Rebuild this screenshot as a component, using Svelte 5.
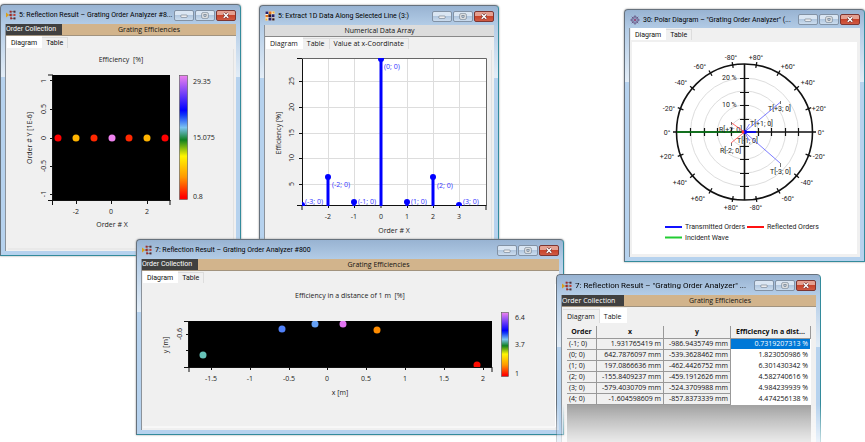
<script>
  const polar = { x: 744.5, y: 132, r: 68 };
  const angles = [20, 40, 60, 80, 100, 120, 140, 160, 200, 220, 240, 260, 280, 300, 320, 340];
  const ticks = angles.map((a) => {
    const c = Math.cos((a * Math.PI) / 180);
    const s = Math.sin((a * Math.PI) / 180);
    return { x1: polar.x + 65 * c, y1: polar.y - 65 * s, x2: polar.x + 71 * c, y2: polar.y - 71 * s };
  });
  const degrees = [
    ['-80°', 731, 60], ['+80°', 756, 60], ['-60°', 700, 69], ['+60°', 788, 69],
    ['-40°', 681, 85], ['+40°', 808, 85], ['-20°', 669, 111], ['+20°', 819, 111],
    ['0°', 667, 135], ['0°', 821, 135], ['+20°', 667, 159], ['-20°', 819, 159],
    ['+40°', 680, 185], ['-40°', 807, 185], ['+60°', 698, 201], ['-60°', 788, 201],
    ['+80°', 731, 210], ['-80°', 756, 210]
  ];
  const efficiencyDots = [
    [58, '#ff0000'], [76, '#ffb400'], [94, '#ff2800'], [112, '#ee82ee'],
    [129, '#ff2800'], [147, '#ffb400'], [165, '#ff0000']
  ];
  const distanceDots = [
    [203, 355, '#66c2b8'], [282, 329, '#5080f8'], [315, 324, '#64a0f4'],
    [343, 324, '#e274f2'], [377, 330, '#ff8c00'], [477, 365, '#ff0c00']
  ];
  const orders = [
    { x: 302, top: 205, label: '(-3; 0)', lx: 305, ly: 204 },
    { x: 328, top: 177, label: '(-2; 0)', lx: 332, ly: 187 },
    { x: 354, top: 202, label: '(-1; 0)', lx: 358, ly: 204 },
    { x: 381, top: 59, label: '(0; 0)', lx: 384, ly: 69 },
    { x: 407, top: 202, label: '(1; 0)', lx: 411, ly: 204 },
    { x: 433, top: 177, label: '(2; 0)', lx: 437, ly: 188 },
    { x: 459, top: 205, label: '(3; 0)', lx: 463, ly: 204 }
  ];
  const rows = [
    ['(-1; 0)', '1.931765419 m', '-986.9435749 mm', '0.7319207313 %'],
    ['(0; 0)', '642.7876097 mm', '-539.3628462 mm', '1.823050986 %'],
    ['(1; 0)', '197.0866636 mm', '-462.4426752 mm', '6.301430342 %'],
    ['(2; 0)', '-155.8409237 mm', '-459.1912626 mm', '4.582740616 %'],
    ['(3; 0)', '-579.4030709 mm', '-524.3709988 mm', '4.984239939 %'],
    ['(4; 0)', '-1.604598609 m', '-857.8373339 mm', '4.474256138 %']
  ];
</script>

{#snippet treeIcon()}
  <svg class="icon" viewBox="0 0 10 10" aria-hidden="true">
    <path d="M0 2.5 3.2 5 0 7.5Z" fill="#d9a01c" />
    <path d="M3 5h3M5 1.5v7M5 1.5h3M5 8.5h3M6 5h3" stroke="#8a6460" stroke-width=".7" fill="none" />
    <g fill="#9e2a2a">
      <rect x="3.6" y=".7" width="1.9" height="1.9" /><rect x="3.6" y="4" width="2" height="2" /><rect x="4.2" y="7.4" width="1.9" height="1.9" />
      <rect x="7.5" y="3.9" width="2" height="2" fill="#c43c30" />
    </g>
    <g fill="#4a3038"><rect x="7.5" y=".7" width="2" height="2" /><rect x="7.5" y="7.4" width="2" height="2" /></g>
  </svg>
{/snippet}

{#snippet dataIcon()}
  <svg class="icon" viewBox="0 0 10 10" aria-hidden="true">
    <rect x=".5" y=".5" width="9" height="9" fill="#fff4dc" />
    <path d="M.5 .5h3v2.500h-3zM6.500 3.200h3v3h-3zM3.500 6.500h3v3h-3z" fill="#24206c" />
    <path d="M4 .5h2.500v2.500H4zM.5 4h2.500v2.200H.5z" fill="#e8731c" />
    <path d="M3.300 3.300h2.700v2.700H3.300zM7.200 7.200h2.300v2.300H7.200z" fill="#2c1420" />
    <path d="M7.500 .5h2v2h-2zM.5 7.500h2v2h-2z" fill="#f2b13c" />
  </svg>
{/snippet}

{#snippet polarIcon()}
  <svg class="icon" viewBox="0 0 10 10" aria-hidden="true" fill="none" stroke="#5c4678" stroke-width=".8">
    <circle cx="5" cy="5" r="3.300" /><path d="M5 0v10M0 5h10M1.700 1.700l6.600 6.600M8.300 1.700 1.700 8.300" stroke-width=".6" />
    <circle cx="5" cy="5" r="1" fill="#a8487c" stroke="none" />
  </svg>
{/snippet}

{#snippet titleBar(icon, title)}
  <header class="title">
    {@render icon()}
    <h2>{title}</h2>
    <div class="controls">
      <button type="button" aria-label="Minimize"><svg viewBox="0 0 18 10"><rect x="5.5" y="4.5" width="7" height="2.5" rx=".8" fill="#fff" stroke="#5f6b78" stroke-width=".7" /></svg></button>
      <button type="button" aria-label="Maximize"><svg viewBox="0 0 18 10"><rect x="5.5" y="2" width="7" height="6" rx=".8" fill="#fff" stroke="#5f6b78" stroke-width=".8" /><rect x="7.7" y="4" width="2.6" height="2" fill="#b8cbe0" stroke="#5f6b78" stroke-width=".7" /></svg></button>
      <button type="button" class="close" aria-label="Close"><svg viewBox="0 0 18 10"><path d="m6.500 2.500 5 5m0-5-5 5" stroke="#6b3030" stroke-width="2.800" /><path d="m6.500 2.500 5 5m0-5-5 5" stroke="#fff" stroke-width="1.700" /></svg></button>
    </div>
  </header>
{/snippet}

{#snippet gratingBar()}
  <div class="bar tan"><span class="collection">Order Collection</span><span class="caption">Grating Efficiencies</span></div>
{/snippet}

{#snippet tabs(names, active)}
  <div class="tabs" role="tablist">
    {#each names as name}
      <button type="button" role="tab" aria-selected={name === active} class:active={name === active}>{name}</button>
    {/each}
  </div>
{/snippet}

{#snippet colorScale(id)}
  <linearGradient {id} x1="0" y1="0" x2="0" y2="1">
    <stop offset="0" stop-color="#ee82ee" />
    <stop offset=".28" stop-color="#0000ff" />
    <stop offset=".32" stop-color="#1038f8" />
    <stop offset=".42" stop-color="#7cc4f0" />
    <stop offset=".52" stop-color="#108020" />
    <stop offset=".65" stop-color="#fff600" />
    <stop offset=".82" stop-color="#ff9800" />
    <stop offset=".98" stop-color="#ff0000" />
  </linearGradient>
{/snippet}

{#snippet turned(label, x, y)}
  <text transform="translate({x} {y}) rotate(-90)" text-anchor="middle">{label}</text>
{/snippet}

<main class="desktop">
  <section class="window reflection">
    {@render titleBar(treeIcon, '5: Reflection Result – Grating Order Analyzer #8...')}
    <div class="body">
      {@render gratingBar()}
      {@render tabs(['Diagram', 'Table'], 'Diagram')}
      <svg class="chart" viewBox="6 49 230 202" role="img" aria-label="Efficiency">
        <defs>{@render colorScale('scaleA')}</defs>
        <path d="M233.500 49v200H8" fill="none" stroke="#e2e2e2" />
        <text x="121" y="62" text-anchor="middle" xml:space="preserve">Efficiency  [%]</text>
        <rect class="plot" x="53" y="75" width="117" height="125" />
        <path class="axis" d="M52.500 75v125.500H170.500M48 75h5M48 200.500h5M52.500 200v5M170 200v5M50 80.500h3M50 109.500h3M50 138.500h3M50 166.500h3M50 194.500h3M76.500 200v4M111.500 200v4M147.500 200v4" />
        {@render turned('1', 46, 81)}
        {@render turned('0.5', 46, 109)}
        {@render turned('0', 46, 138)}
        {@render turned('-0.5', 46, 166)}
        {@render turned('-1', 46, 194)}
        {@render turned('Order # Y [1E-6]', 32, 138)}
        <g text-anchor="middle">
          <text x="76" y="214">-2</text><text x="111" y="214">0</text><text x="147" y="214">2</text>
          <text x="112" y="227">Order # X</text>
        </g>
        {#each efficiencyDots as [x, color]}<circle cx={x} cy="138" r="3.5" fill={color} />{/each}
        <rect x="179.5" y="75.5" width="8" height="124" fill="url(#scaleA)" stroke="#555" stroke-width=".6" />
        <text x="193" y="84">29.35</text><text x="193" y="140">15.075</text><text x="193" y="199">0.8</text>
      </svg>
    </div>
  </section>

  <section class="window extract">
    {@render titleBar(dataIcon, '5: Extract 1D Data Along Selected Line (3:)')}
    <div class="body">
      <div class="bar gray"><span class="caption">Numerical Data Array</span></div>
      {@render tabs(['Diagram', 'Table', 'Value at x-Coordinate'], 'Diagram')}
      <svg class="chart" viewBox="265 50 229 194" role="img" aria-label="Numerical Data Array">
        <path d="M491.500 50v194" fill="none" stroke="#e2e2e2" />
        <rect x="302" y="59" width="184" height="146" fill="#fff" />
        <path d="M328.500 59v146M354.500 59v146M407.500 59v146M433.500 59v146M459.500 59v146M302 81.500h184M302 107.500h184M302 133.500h184M302 158.500h184M302 184.500h184" stroke="#ddd" />
        <path d="M302 58.500H486.500V205" fill="none" stroke="#666" />
        <path class="axis" d="M302.500 59v146.500H486.500M297 58.500h5M297 205.500h5M302 205v5M486 205v5M299 81.500h3M299 107.500h3M299 133.500h3M299 158.500h3M299 184.500h3M328.500 205v3M354.500 205v3M381 205v3M407.500 205v3M433.500 205v3M459.500 205v3" />
        <clipPath id="plotB"><rect x="302" y="58" width="184" height="148" /></clipPath>
        <g clip-path="url(#plotB)" fill="#00f">
          {#each orders as o}
            <path d="M{o.x} {o.top}V206" stroke="#00f" stroke-width="3" /><circle cx={o.x} cy={o.top} r="3" />
          {/each}
        </g>
        <g class="order">{#each orders as o}<text x={o.lx} y={o.ly}>{o.label}</text>{/each}</g>
        {@render turned('25', 294, 81)}
        {@render turned('20', 294, 107)}
        {@render turned('15', 294, 133)}
        {@render turned('10', 294, 158)}
        {@render turned('5', 294, 184)}
        {@render turned('Efficiency [%]', 281, 133)}
        <g text-anchor="middle">
          <text x="328" y="219">-2</text><text x="354" y="219">-1</text><text x="381" y="219">0</text>
          <text x="407" y="219">1</text><text x="433" y="219">2</text><text x="459" y="219">3</text>
          <text x="394" y="233">Order # X</text>
        </g>
      </svg>
    </div>
  </section>

  <section class="window polar">
    {@render titleBar(polarIcon, '30: Polar Diagram – "Grating Order Analyzer" (...')}
    <div class="body">
      {@render tabs(['Diagram', 'Table'], 'Diagram')}
      <svg class="chart" viewBox="630 40 230 217" role="img" aria-label="Polar Diagram">
        <rect x="632" y="42" width="225" height="212" fill="#fff" />
        <g fill="none" stroke="#ddd">
          <circle cx={polar.x} cy={polar.y} r="14" /><circle cx={polar.x} cy={polar.y} r="27" />
          <circle cx={polar.x} cy={polar.y} r="41" /><circle cx={polar.x} cy={polar.y} r="54" />
        </g>
        <g fill="none" stroke="#111">
          <circle cx={polar.x} cy={polar.y} r={polar.r} stroke-width="1.6" />
          {#each ticks as t}<line x1={t.x1} y1={t.y1} x2={t.x2} y2={t.y2} stroke-width="1.3" />{/each}
          <path d="M744.500 64V200M673 132H816" stroke-width="1.600" />
          <path d="M740 78.500h9M740 92.500h9M740 105.500h9M740 119.500h9M740 146.500h9M740 159.500h9M740 173.500h9M740 186.500h9M690.500 128v8M704.500 128v8M717.500 128v8M731.500 128v8M758.500 128v8M771.500 128v8M785.500 128v8M798.500 128v8" stroke-width="1.200" />
        </g>
        <path d="M677 132h67" stroke="#007c10" stroke-width="1.600" />
        <g class="small">
          <text x="719" y="132">R[+2; 0]</text><text x="720" y="153">R[-2; 0]</text>
          <text x="768" y="111">T[+3; 0]</text><text x="770" y="174">T[-3; 0]</text>
          <text x="750" y="126">T[+1; 0]</text><text x="737" y="143">T[-1; 0]</text>
        </g>
        <path d="M744.500 132 731 122.500M744.500 132 731 143" stroke="#f44" stroke-width=".8" />
        <path d="M744.500 132 780 102.500M744.500 132 780 163M744.500 132l5-8M744.500 132l5 9" stroke="#5a5aff" stroke-width=".8" />
        <path d="M780.500 101v3M780.500 163v4M731.500 122v3M731.500 143v3" stroke="#333" stroke-width=".7" />
        <path d="M744 132h12" stroke="#00f" stroke-width="1.600" /><circle cx="745" cy="132" r="2" fill="#00f" /><circle cx="743" cy="132" r="1.5" fill="#f33" />
        <g class="small" text-anchor="middle">{#each degrees as [label, x, y]}<text {x} {y}>{label}</text>{/each}</g>
        <g class="small"><text x="722" y="80">20 %</text><text x="722" y="107">10 %</text></g>
        <path d="M665 227h17" stroke="#11f" stroke-width="2" /><path d="M747 227h17" stroke="#f11" stroke-width="2" /><path d="M665 237.500h17" stroke="#2c3" stroke-width="2" />
        <g class="small"><text x="685" y="229">Transmitted Orders</text><text x="767" y="229">Reflected Orders</text><text x="685" y="240">Incident Wave</text></g>
      </svg>
    </div>
  </section>

  <section class="window distance">
    {@render titleBar(treeIcon, '7: Reflection Result – Grating Order Analyzer #800')}
    <div class="body">
      {@render gratingBar()}
      {@render tabs(['Diagram', 'Table'], 'Diagram')}
      <svg class="chart" viewBox="142 284 417 146" role="img" aria-label="Efficiency in a distance of 1 m">
        <defs>{@render colorScale('scaleC')}</defs>
        <path d="M555.500 284v143H143" fill="none" stroke="#fff" />
        <text x="350" y="298" text-anchor="middle" xml:space="preserve">Efficiency in a distance of 1 m  [%]</text>
        <rect class="plot" x="189" y="321" width="303" height="46" />
        <path class="axis" d="M188.500 321v46.500H492M184 321.500h5M184 367.500h5M189 367v5M492 367v5M186 334.500h3M186 350.500h3M211.500 367v3M250.500 367v3M289.500 367v3M327.500 367v3M366.500 367v3M405.500 367v3M444.500 367v3M483.500 367v3" />
        <clipPath id="plotC"><rect x="189" y="321" width="303" height="46" /></clipPath>
        <g clip-path="url(#plotC)">{#each distanceDots as [x, y, color]}<circle cx={x} cy={y} r="3.5" fill={color} />{/each}</g>
        {@render turned('-0.6', 182, 334)}
        {@render turned('y [m]', 168, 345)}
        <g text-anchor="middle">
          <text x="211" y="381">-1.5</text><text x="250" y="381">-1</text><text x="289" y="381">-0.5</text><text x="327" y="381">0</text>
          <text x="366" y="381">0.5</text><text x="405" y="381">1</text><text x="444" y="381">1.5</text><text x="483" y="381">2</text>
          <text x="340" y="395">x [m]</text>
        </g>
        <rect x="501.5" y="312.5" width="7" height="64" fill="url(#scaleC)" stroke="#555" stroke-width=".6" />
        <text x="515" y="320">6.4</text><text x="515" y="347">3.7</text><text x="515" y="376">1</text>
      </svg>
    </div>
  </section>

  <section class="window values">
    {@render titleBar(treeIcon, '7: Reflection Result – "Grating Order Analyzer" ...')}
    <div class="body">
      {@render gratingBar()}
      {@render tabs(['Diagram', 'Table'], 'Table')}
      <div class="sheet">
        <table>
          <thead><tr><th class="first">Order</th><th>x</th><th>y</th><th class="last">Efficiency in a dist...</th></tr></thead>
          <tbody>
            {#each rows as row, i}
              <tr><th scope="row">{row[0]}</th><td>{row[1]}</td><td>{row[2]}</td><td class="white" class:selected={i === 0}>{row[3]}</td></tr>
            {/each}
          </tbody>
        </table>
      </div>
    </div>
  </section>
</main>

<style>
  :global(body) { margin: 0; background: #fff; overflow: hidden; }
  .desktop {
    --sans: "Open Sans", "Noto Sans", sans-serif;
    --narrow: Roboto, "Open Sans", sans-serif;
    position: relative;
    min-height: 100vh;
    overflow: hidden;
    font: 7px/10px var(--sans);
    color: #111;
  }
  .window {
    position: absolute;
    box-sizing: border-box;
    display: flex;
    flex-direction: column;
    padding: 0 4px 4px;
    border: 1px solid #66717c;
    border-right-color: #338b9c;
    border-bottom-color: #338b9c;
    border-radius: 4px 4px 0 0;
    background: linear-gradient(#98b3d2 0, #b4cde7 20px, #e3edf7 72px, #b6d2ee 72px);
    box-shadow: 0 0 2px #888;
  }
  .reflection { left: 0; top: 4px; width: 241px; height: 252px; }
  .extract { left: 259px; top: 5px; width: 240px; height: 244px; }
  .polar { left: 624px; top: 9px; width: 241px; height: 253px; }
  .distance { left: 136px; top: 239px; width: 428px; height: 196px; }
  .values {
    left: 556px; top: 274px; width: 265px; height: 190px;
    mask-image: linear-gradient(#000 130px, transparent 182px);
  }
  .title {
    display: flex;
    align-items: center;
    gap: 3px;
    height: 19px;
    padding: 1px 0 0 1px;
    box-sizing: border-box;
    flex: none;
  }
  .polar .title { height: 18px; }
  .values .title { height: 20px; }
  .icon { width: 10px; height: 10px; flex: none; }
  h2 { margin: 0; flex: 1; min-width: 0; font: 7px/12px var(--narrow); color: #000; white-space: nowrap; }
  .values h2 { font-size: 8px; }
  .controls { display: flex; gap: 1px; flex: none; }
  .controls button {
    display: block;
    width: 20px;
    height: 11px;
    padding: 0;
    border: 1px solid #8292a5;
    border-radius: 2px;
    background: linear-gradient(#dae6f3 45%, #b2c8e0 50%, #cbdcee);
  }
  .controls svg { display: block; width: 18px; height: 9px; }
  .controls .close { border-color: #7d3632; background: linear-gradient(#e5a091 40%, #c8432a 50%, #cf5b45); }
  .body {
    flex: 1;
    display: flex;
    flex-direction: column;
    min-height: 0;
    border: 1px solid #8b929a;
    border-width: 0 0 0 1px;
    background: #f0f0f0;
  }
  .bar { display: flex; flex: none; height: 11px; line-height: 11px; }
  .caption { flex: 1; text-align: center; }
  .tan { background: #d2b48c; border-bottom: 1px solid #a2937e; }
  .gray { background: #dcdcdc; border-bottom: 1px solid #888; }
  .collection { width: 56px; background: #404040; color: #fff; font-family: var(--narrow); }
  .values .collection { width: 62px; font-family: var(--sans); }
  .tabs { display: flex; align-items: flex-start; flex: none; height: 13px; padding: 0 1px; box-sizing: border-box; }
  .tabs button {
    height: 11px;
    margin-top: 1px;
    padding: 0 4px;
    border: 1px solid #ddd;
    border-width: 1px 1px 0 0;
    background: #f0f0f0;
    color: #111;
    font: 7px/10px var(--narrow);
  }
  .tabs .active { height: 12px; margin-top: 0; border-color: #fff; background: #fff; }
  .polar .tabs { height: 12px; }
  .extract .tabs button, .values .tabs button { font-family: var(--sans); }
  .values .tabs { height: 16px; padding: 1px 1px 0; }
  .values .tabs button { height: 14px; line-height: 13px; }
  .values .tabs .active { height: 15px; }
  .chart { display: block; width: 100%; flex: 1; min-height: 0; font-size: 7px; fill: #222; }
  .chart .plot { fill: #000; }
  .chart .axis { fill: none; stroke: #111; stroke-width: 1; }
  .order { fill: #33f; }
  .small { font-family: var(--narrow); }
  .sheet { flex: 1; margin: 3px 5px 0; background: linear-gradient(#a0a0a0 80px, #b8b8b8); }
  table { width: 100%; border-collapse: collapse; table-layout: fixed; background: #f0f0f0; }
  th, td {
    height: 10px;
    padding: 0 2px;
    border: 1px solid #999;
    border-width: 0 1px 1px 0;
    font-weight: 400;
    line-height: 10px;
    text-align: right;
    white-space: nowrap;
  }
  tbody th { text-align: left; }
  thead th { height: 12px; font-weight: 700; text-align: center; }
  .first { width: 25px; }
  .last { width: 75px; }
  td.white { border-color: #fff; background: #fff; }
  td.selected { background: #0078d7; color: #fff; }
</style>
